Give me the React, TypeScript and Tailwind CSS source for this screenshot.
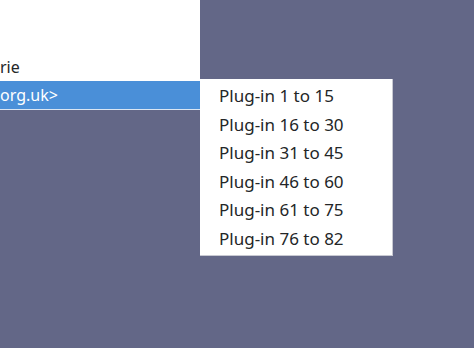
import React from "react";

const items = [
  "Plug-in 1 to 15",
  "Plug-in 16 to 30",
  "Plug-in 31 to 45",
  "Plug-in 46 to 60",
  "Plug-in 61 to 75",
  "Plug-in 76 to 82",
];

export default function App() {
  return (
    <div
      className="relative w-[474px] h-[348px] bg-[#636787] overflow-hidden text-[16px]"
      style={{ fontFamily: '"Noto Sans", sans-serif' }}
    >
      <div className="w-[200px] flex flex-col">
        <div className="h-[81px] bg-white flex flex-col justify-end">
          <div className="h-[28px] leading-[28px] text-[#232627] pb-[1px]">rie</div>
        </div>
        <div className="h-[28px] leading-[28px] bg-[#4a8fd8] text-white">org.uk&gt;</div>
        <div className="h-[1px] bg-[#dbe6f3]" />
      </div>
      <div className="absolute left-[200px] top-[79px] w-[193px] h-[177px] bg-white border-r border-b border-[#c8c9d2] py-[3px] flex flex-col text-[17px]">
        {items.map((t) => (
          <div key={t} className="h-[28.6px] leading-[28.6px] pl-[19px] text-[#232627]">
            {t}
          </div>
        ))}
      </div>
    </div>
  );
}
